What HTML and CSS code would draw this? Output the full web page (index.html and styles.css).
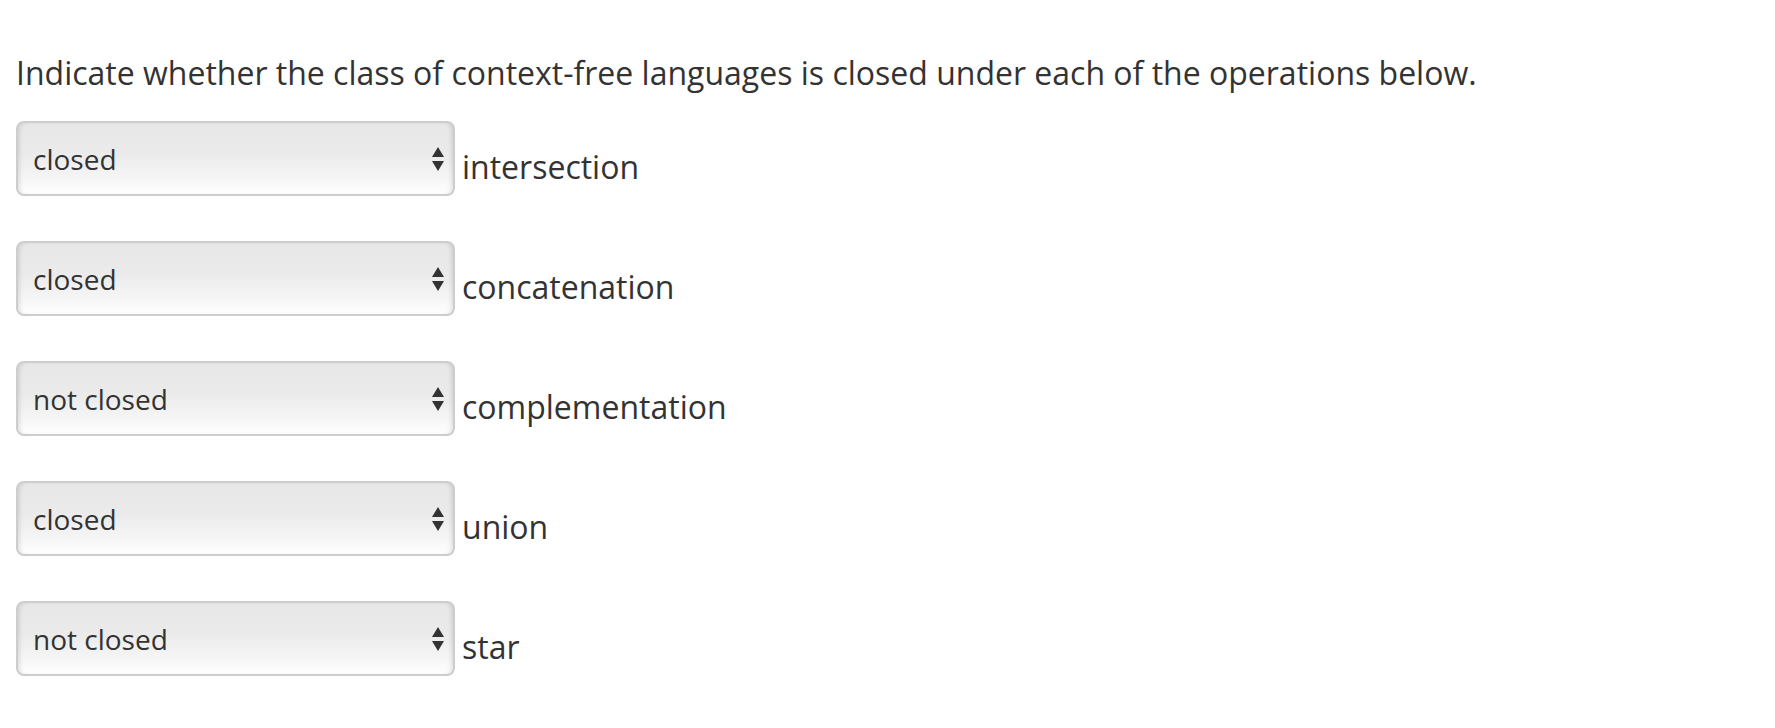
FILE: index.html
```html
<!DOCTYPE html>
<html>
<head>
<meta charset="utf-8">
<link rel="stylesheet" href="styles.css">
</head>
<body>
<div class="page">
  <p class="prompt">Indicate whether the class of context-free languages is closed under each of the operations below.</p>
  <div class="rows">
    <div class="row">
      <div class="select"><span class="value">closed</span><svg class="arrows" width="14" height="24" viewBox="0 0 14 24"><path d="M7 0 L13 10 L1 10 Z M1 14 L13 14 L7 24 Z" fill="#333"/></svg></div>
      <span class="label">intersection</span>
    </div>
    <div class="row">
      <div class="select"><span class="value">closed</span><svg class="arrows" width="14" height="24" viewBox="0 0 14 24"><path d="M7 0 L13 10 L1 10 Z M1 14 L13 14 L7 24 Z" fill="#333"/></svg></div>
      <span class="label">concatenation</span>
    </div>
    <div class="row">
      <div class="select"><span class="value">not closed</span><svg class="arrows" width="14" height="24" viewBox="0 0 14 24"><path d="M7 0 L13 10 L1 10 Z M1 14 L13 14 L7 24 Z" fill="#333"/></svg></div>
      <span class="label">complementation</span>
    </div>
    <div class="row">
      <div class="select"><span class="value">closed</span><svg class="arrows" width="14" height="24" viewBox="0 0 14 24"><path d="M7 0 L13 10 L1 10 Z M1 14 L13 14 L7 24 Z" fill="#333"/></svg></div>
      <span class="label">union</span>
    </div>
    <div class="row">
      <div class="select"><span class="value">not closed</span><svg class="arrows" width="14" height="24" viewBox="0 0 14 24"><path d="M7 0 L13 10 L1 10 Z M1 14 L13 14 L7 24 Z" fill="#333"/></svg></div>
      <span class="label">star</span>
    </div>
  </div>
</div>
</body>
</html>
```
FILE: styles.css
```css
html, body {
  margin: 0;
  padding: 0;
  background: #ffffff;
}
.page {
  padding: 51px 0 0 16px;
  font-family: "Open Sans", "Noto Sans", sans-serif;
  color: #333333;
}
.prompt {
  margin: 0 0 26px 0;
  font-size: 32px;
  line-height: 44px;
}
.rows {
  display: flex;
  flex-direction: column;
  gap: 45px;
}
.row {
  display: flex;
  align-items: flex-start;
}
.select {
  box-sizing: border-box;
  width: 439px;
  height: 75px;
  border: 2px solid #cdcdcd;
  border-radius: 8px;
  background: linear-gradient(#e7e7e7 0%, #ebebeb 45%, #f6f6f6 80%, #ffffff 100%);
  box-shadow: inset 4px 0 5px -3px rgba(0,0,0,0.14), inset -4px 0 5px -3px rgba(0,0,0,0.14);
  display: flex;
  align-items: center;
  justify-content: space-between;
  padding: 0 8px 0 15px;
  font-size: 28px;
  color: #333333;
}
.value {
  line-height: 38px;
}
.arrows {
  display: block;
}
.label {
  margin: 24px 0 0 7px;
  font-size: 32px;
  line-height: 44px;
}
```
